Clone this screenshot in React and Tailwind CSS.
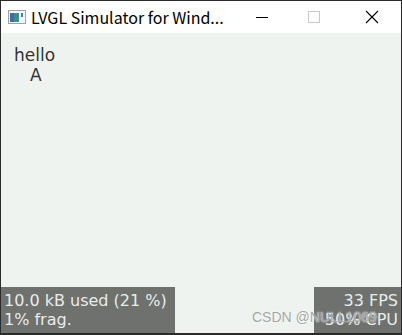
export default function App() {
  return (
    <div className="w-[402px] h-[335px] bg-[#2b2b2b] p-[1px] flex flex-col overflow-hidden">
      <div className="h-[32px] bg-white flex items-center shrink-0">
        <div className="w-[30px] flex justify-center pl-[2px]">
          <svg width="18" height="14" viewBox="0 0 18 14">
            <rect x="0.5" y="0.5" width="17" height="13" fill="#f4f6f8" stroke="#9aa4ae" />
            <rect x="2" y="3" width="9" height="9" fill="#3f8c8c" />
            <rect x="2" y="3" width="4" height="9" fill="#3b6fa3" />
            <rect x="13" y="3" width="2" height="4" fill="#4c7aa8" />
          </svg>
        </div>
        <span className="text-[16px] text-black font-['Noto_Sans_CJK_SC','Noto_Sans',sans-serif] leading-none">LVGL Simulator for Wind...</span>
        <div className="ml-auto flex items-center h-full">
          <div className="w-[46px] h-full flex items-center justify-center">
            <div className="w-[12px] h-[1px] bg-black" />
          </div>
          <div className="w-[58px] h-full flex items-center justify-center">
            <div className="w-[12px] h-[12px] border border-[#c8c8c8]" />
          </div>
          <div className="w-[58px] h-full flex items-center justify-center">
            <svg width="14" height="14" viewBox="0 0 14 14">
              <path d="M1 1L13 13M13 1L1 13" stroke="#000" strokeWidth="1.1" />
            </svg>
          </div>
        </div>
      </div>
      <div className="flex-1 bg-[#eff3f0] relative flex flex-col font-['DejaVu_Sans',sans-serif] mb-[1px]">
        <div className="pl-[13px] pt-[12px] text-[#333] text-[17px] leading-[20px]">
          <div>hello</div>
          <div className="pl-[16px]">A</div>
        </div>
        <div className="mt-auto flex justify-between items-end">
          <div className="bg-[#6e716e] text-[#e9ece9] text-[16px] leading-[19px] pl-[3px] pt-[4px] pb-[4px] w-[174px] whitespace-nowrap">
            <div>10.0 kB used (21 %)</div>
            <div>1% frag.</div>
          </div>
          <div className="bg-[#6e716e] text-[#e9ece9] text-[16px] leading-[19px] pr-[3px] pt-[4px] pb-[4px] w-[87px] text-right whitespace-nowrap">
            <div>33 FPS</div>
            <div>50% CPU</div>
          </div>
        </div>
        <div className="absolute left-[251px] bottom-[5px] text-[14px] text-[#a6a6a6] font-['Liberation_Sans',sans-serif] [text-shadow:0_0_2px_#fff]">CSDN @NULL1069</div>
      </div>
    </div>
  );
}
